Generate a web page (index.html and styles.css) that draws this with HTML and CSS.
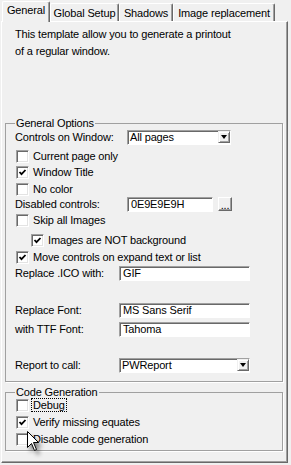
FILE: index.html
```html
<!DOCTYPE html>
<html lang="en">
<head>
    <meta charset="UTF-8">
    <title>Window Template Options</title>
    <link rel="stylesheet" href="styles.css">
</head>
<body>
    <div class="tabs">
        <div class="tab active tab-general">General</div>
        <div class="tab tab-global">Global Setup</div>
        <div class="tab tab-shadows">Shadows</div>
        <div class="tab tab-image">Image replacement</div>
    </div>

    <div class="panel">
        <p class="intro">This template allow you to generate a printout<br>of a regular window.</p>

        <fieldset class="group group-options">
            <legend>General Options</legend>
            <div class="row">
                <span class="label">Controls on Window:</span>
                <div class="combo combo-short"><span class="value">All pages</span><span class="drop"><i></i></span></div>
            </div>
            <div class="row">
                <span class="cb"></span><span>Current page only</span>
            </div>
            <div class="row">
                <span class="cb"><svg viewBox="0 0 9 9"><polyline points="1.5,4 3.5,6.2 7.5,2" /></svg></span><span>Window Title</span>
            </div>
            <div class="row">
                <span class="cb"></span><span>No color</span>
            </div>
            <div class="row">
                <span class="label">Disabled controls:</span>
                <div class="field field-mid">0E9E9E9H</div>
                <div class="dots">...</div>
            </div>
            <div class="row">
                <span class="cb"></span><span>Skip all Images</span>
            </div>
            <div class="row">
                <span class="cb cb-indent"><svg viewBox="0 0 9 9"><polyline points="1.5,4 3.5,6.2 7.5,2" /></svg></span><span>Images are NOT background</span>
            </div>
            <div class="row">
                <span class="cb"><svg viewBox="0 0 9 9"><polyline points="1.5,4 3.5,6.2 7.5,2" /></svg></span><span>Move controls on expand text or list</span>
            </div>
            <div class="row">
                <span class="label label-narrow">Replace .ICO with:</span>
                <div class="field field-long">GIF</div>
            </div>
            <div class="row">
                <span class="label label-narrow">Replace Font:</span>
                <div class="field field-long">MS Sans Serif</div>
            </div>
            <div class="row">
                <span class="label label-narrow">with TTF Font:</span>
                <div class="field field-long">Tahoma</div>
            </div>
            <div class="row">
                <span class="label label-narrow">Report to call:</span>
                <div class="combo combo-long"><span class="value">PWReport</span><span class="drop"><i></i></span></div>
            </div>
        </fieldset>

        <fieldset class="group group-code">
            <legend>Code Generation</legend>
            <div class="row">
                <span class="cb"></span><span class="focus">Debug</span>
            </div>
            <div class="row">
                <span class="cb"><svg viewBox="0 0 9 9"><polyline points="1.5,4 3.5,6.2 7.5,2" /></svg></span><span>Verify missing equates</span>
            </div>
            <div class="row">
                <span class="cb"></span><span>Disable code generation</span>
            </div>
        </fieldset>

        <svg class="cursor" viewBox="0 0 13 21" width="13" height="21">
            <path d="M0.5 0.5 L0.5 16.5 L4.5 12.5 L7.5 19.5 L9.5 18.5 L6.5 11.5 L11.5 11.5 Z" />
        </svg>
    </div>
</body>
</html>
```

FILE: styles.css
```css
body {
    margin: 0;
    background: #f0f0f0;
    font-family: "Liberation Sans", Arial, sans-serif;
    font-size: 11px;
    letter-spacing: -0.15px;
    color: #000;
}

/* tab strip */
.tabs {
    display: flex;
    align-items: flex-end;
    height: 21px;
    padding-left: 2px;
}
.tab {
    box-sizing: border-box;
    height: 18px;
    padding-top: 3px;
    text-align: center;
    white-space: nowrap;
    border-top: 1px solid #fff;
    border-left: 1px solid #fff;
    border-right: 1px solid #696969;
    border-radius: 2px 2px 0 0;
    box-shadow: inset -1px 0 0 #a0a0a0;
}
.tab.active {
    position: relative;
    z-index: 1;
    height: 21px;
    margin-bottom: -1px;
    padding-top: 2px;
    background: #f0f0f0;
}
.tab-general { width: 48px; }
.tab-global { width: 69px; }
.tab-shadows { width: 54px; }
.tab-image { width: 102px; }

/* page body */
.panel {
    position: relative;
    box-sizing: border-box;
    width: 287px;
    height: 442px;
    margin-left: 1px;
    border-top: 1px solid #fff;
    border-left: 1px solid #fff;
    border-right: 1px solid #696969;
    border-bottom: 1px solid #696969;
    box-shadow: inset -1px -1px 0 #a0a0a0;
}
.intro {
    margin: 0;
    padding: 4px 0 0 13px;
    line-height: 17px;
}

/* group boxes */
.group {
    box-sizing: border-box;
    width: 278px;
    margin: 0 0 0 3px;
    padding: 0 0 8px 9px;
    border: 1px solid #a0a0a0;
    box-shadow: 1px 1px 0 #fff;
    display: grid;
    align-items: start;
}
.group legend {
    padding: 0 1px;
    line-height: 12px;
}
.group-options {
    margin-top: 57px;
    grid-template-rows: 19px 16px 17px 15px 16px 20px 17px 16px 37px 19px 36px 16px;
}
.group-code {
    margin-top: 5px;
    padding-bottom: 3px;
    grid-template-rows: 17px 17px 16px;
}
.group-code legend {
    line-height: 10px;
}

.row {
    display: flex;
    align-items: center;
    height: 16px;
    white-space: nowrap;
}
.label {
    width: 112px;
}
.label-narrow {
    width: 104px;
}

/* checkboxes */
.cb {
    box-sizing: border-box;
    display: flex;
    align-items: center;
    justify-content: center;
    width: 13px;
    height: 13px;
    margin: 0 4px 0 1px;
    background: #fff;
    border: 1px solid;
    border-color: #a0a0a0 #fff #fff #a0a0a0;
    box-shadow: inset 1px 1px 0 #696969, inset -1px -1px 0 #e3e3e3;
}
.cb-indent {
    margin-left: 16px;
}
.cb svg {
    width: 9px;
    height: 9px;
}
.cb polyline {
    fill: none;
    stroke: #000;
    stroke-width: 1.8;
}
.focus {
    outline: 1px dotted #000;
    outline-offset: 0;
    padding: 0 1px;
    margin-left: -1px;
}

/* text fields and combos */
.field,
.combo {
    box-sizing: border-box;
    height: 15px;
    background: #fff;
    border: 1px solid;
    border-color: #a0a0a0 #fff #fff #a0a0a0;
    box-shadow: inset 1px 1px 0 #696969;
    line-height: 13px;
    padding-left: 3px;
}
.field-mid { width: 86px; }
.field-long { width: 131px; }
.combo {
    display: flex;
    align-items: center;
    padding-left: 2px;
}
.combo-short { width: 104px; }
.combo-long { width: 131px; }
.combo .value {
    flex: 1;
}
.drop {
    box-sizing: border-box;
    display: flex;
    align-items: center;
    justify-content: center;
    width: 12px;
    height: 12px;
    background: #f0f0f0;
    border: 1px solid;
    border-color: #f0f0f0 #696969 #696969 #f0f0f0;
    box-shadow: inset 1px 1px 0 #fff, inset -1px -1px 0 #a0a0a0;
}
.drop i {
    width: 0;
    height: 0;
    border-left: 3px solid transparent;
    border-right: 3px solid transparent;
    border-top: 4px solid #000;
}
.dots {
    box-sizing: border-box;
    width: 14px;
    height: 14px;
    margin-left: 5px;
    background: #f0f0f0;
    border: 1px solid;
    border-color: #fff #696969 #696969 #fff;
    box-shadow: inset -1px -1px 0 #a0a0a0;
    text-align: center;
    line-height: 14px;
}

/* mouse pointer left in the capture */
.cursor {
    position: absolute;
    left: 25px;
    top: 409px;
    filter: drop-shadow(3px 4px 2px rgba(0, 0, 0, 0.45));
}
.cursor path {
    fill: #fff;
    stroke: #000;
    stroke-width: 1;
}
```
